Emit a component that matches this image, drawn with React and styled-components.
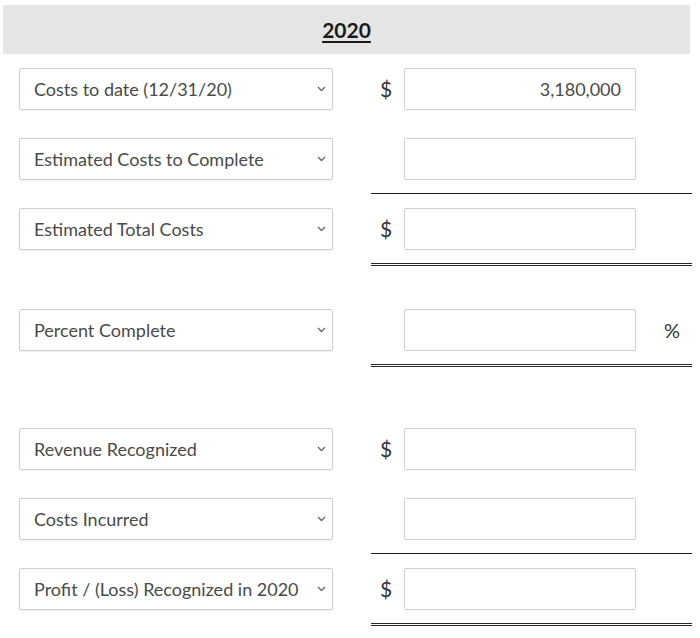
import React from "react";
import styled, { createGlobalStyle } from "styled-components";

const Global = createGlobalStyle`
  html, body { margin: 0; padding: 0; background: #fff; }
  body { font-family: Lato, "Open Sans", sans-serif; color: #333; }
`;

const Page = styled.div`
  width: 700px;
  padding: 5px 0 0 0;
`;

const Header = styled.div`
  margin: 0 10px 0 3px;
  height: 49px;
  background: #e5e5e5;
  display: flex;
  align-items: center;
  justify-content: center;
`;

const Year = styled.span`
  font-size: 21px;
  font-weight: 700;
  color: #1a1a1a;
  text-decoration: underline;
  text-underline-offset: 3px;
  text-decoration-thickness: 1.5px;
`;

const Row = styled.div`
  display: flex;
  align-items: flex-start;
  margin-top: ${(p) => p.$gap}px;
  padding-left: 19px;
`;

const SelectBox = styled.div`
  box-sizing: border-box;
  width: 314px;
  height: 42px;
  border: 1px solid #cfcfcf;
  border-radius: 2px;
  box-shadow: 0 1px 1px rgba(0, 0, 0, 0.06);
  display: flex;
  align-items: center;
  justify-content: space-between;
  padding: 0 6px 0 14px;
  font-size: 18px;
  color: #4a4a4a;
  background: #fff;
  white-space: nowrap;
`;

const Chevron = styled.svg`
  width: 9px;
  height: 6px;
  flex: none;
`;

const Amount = styled.div`
  margin-left: 38px;
  width: 321px;
  box-sizing: border-box;
  display: flex;
  align-items: center;
  padding-bottom: ${(p) => (p.$line ? 13 : 0)}px;
  border-bottom: ${(p) =>
    p.$line === "double" ? "3px double #2a2a2a" : p.$line === "single" ? "1px solid #1f1f1f" : "none"};
`;

const Sign = styled.span`
  width: 33px;
  box-sizing: border-box;
  padding-left: 9px;
  font-size: 21px;
  color: #333;
  line-height: 42px;
`;

const Input = styled.div`
  box-sizing: border-box;
  width: 232px;
  height: 42px;
  border: 1px solid #cfcfcf;
  border-radius: 2px;
  display: flex;
  align-items: center;
  justify-content: flex-end;
  padding-right: 14px;
  font-size: 18px;
  color: #4a4a4a;
`;

const Suffix = styled.span`
  flex: 1;
  text-align: center;
  font-size: 20px;
  color: #333;
  padding-left: 16px;
`;

const rows = [
  { label: "Costs to date (12/31/20)", sign: "$", value: "3,180,000", gap: 14 },
  { label: "Estimated Costs to Complete", gap: 28, line: "single" },
  { label: "Estimated Total Costs", sign: "$", gap: 14, line: "double" },
  { label: "Percent Complete", suffix: "%", gap: 43, line: "double" },
  { label: "Revenue Recognized", sign: "$", gap: 61 },
  { label: "Costs Incurred", gap: 28, line: "single" },
  { label: "Profit / (Loss) Recognized in 2020", sign: "$", gap: 14, line: "double" },
];

export default function App() {
  return (
    <Page>
      <Global />
      <Header>
        <Year>2020</Year>
      </Header>
      {rows.map((r) => (
        <Row key={r.label} $gap={r.gap}>
          <SelectBox>
            <span>{r.label}</span>
            <Chevron viewBox="0 0 9 6">
              <path d="M1 1 L4.5 4.5 L8 1" fill="none" stroke="#666" strokeWidth="1.3" />
            </Chevron>
          </SelectBox>
          <Amount $line={r.line}>
            <Sign>{r.sign || ""}</Sign>
            <Input>{r.value || ""}</Input>
            {r.suffix && <Suffix>{r.suffix}</Suffix>}
          </Amount>
        </Row>
      ))}
    </Page>
  );
}
